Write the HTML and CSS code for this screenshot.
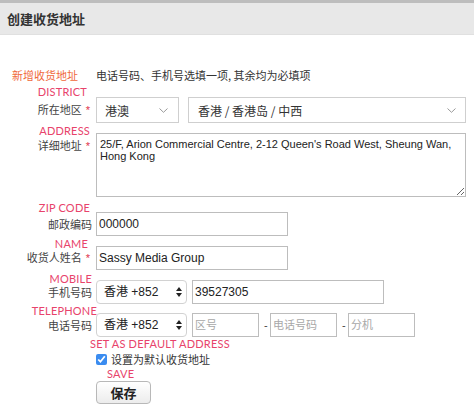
FILE: index.html
```html
<!DOCTYPE html>
<html lang="zh-CN">
<head>
<meta charset="utf-8">
<title>创建收货地址</title>
<link rel="stylesheet" href="styles.css">
</head>
<body>
<header class="topbar">
  <h1 class="topbar-title">创建收货地址</h1>
</header>

<main class="address-form">
  <div class="intro">
    <span class="intro-title">新增收货地址</span>
    <span class="intro-note">电话号码、手机号选填一项, 其余均为必填项</span>
  </div>

  <div class="row row-district">
    <div class="label"><span class="caption cap-district">DISTRICT</span>所在地区<i class="req">*</i></div>
    <div class="field field-split">
      <select class="flat-select flat-select-short"><option>港澳</option></select>
      <select class="flat-select flat-select-wide"><option>香港 / 香港岛 / 中西</option></select>
    </div>
  </div>

  <div class="row row-address">
    <div class="label"><span class="caption cap-address">ADDRESS</span>详细地址<i class="req">*</i></div>
    <div class="field">
      <textarea class="text-area">25/F, Arion Commercial Centre, 2-12 Queen's Road West, Sheung Wan, Hong Kong</textarea>
    </div>
  </div>

  <div class="row row-zip">
    <div class="label label-plain"><span class="caption cap-zip">ZIP CODE</span>邮政编码</div>
    <div class="field">
      <input class="text-input text-input-mid" type="text" value="000000">
    </div>
  </div>

  <div class="row row-name">
    <div class="label"><span class="caption cap-name">NAME</span>收货人姓名<i class="req">*</i></div>
    <div class="field">
      <input class="text-input text-input-mid" type="text" value="Sassy Media Group">
    </div>
  </div>

  <div class="row row-mobile">
    <div class="label label-plain"><span class="caption cap-mobile">MOBILE</span>手机号码</div>
    <div class="field field-inline">
      <select class="round-select"><option>香港 +852</option></select>
      <input class="text-input text-input-mid" type="text" value="39527305">
    </div>
  </div>

  <div class="row row-tel">
    <div class="label label-plain"><span class="caption cap-tel">TELEPHONE</span>电话号码</div>
    <div class="field field-inline">
      <select class="round-select"><option>香港 +852</option></select>
      <input class="text-input text-input-short" type="text" placeholder="区号">
      <span class="dash">-</span>
      <input class="text-input text-input-short" type="text" placeholder="电话号码">
      <span class="dash">-</span>
      <input class="text-input text-input-short" type="text" placeholder="分机">
    </div>
  </div>

  <div class="actions">
    <span class="caption-flow cap-default">SET AS DEFAULT ADDRESS</span>
    <label class="check-line"><input class="check" type="checkbox" checked>设置为默认收货地址</label>
    <span class="caption-flow cap-save">SAVE</span>
    <button class="save-btn" type="button">保存</button>
  </div>
</main>
</body>
</html>
```

FILE: styles.css
```css
html, body {
  margin: 0;
  padding: 0;
  background: #ffffff;
}

body {
  font-family: "Liberation Sans", "Noto Sans CJK SC", sans-serif;
  color: #333333;
  font-size: 11px;
}

/* ---------- top bar ---------- */
.topbar {
  border-top: 3px solid #bdbdbd;
  background: #e8e8e8;
  height: 31px;
  border-bottom: 1px solid #e0e0e0;
  box-sizing: content-box;
}

.topbar-title {
  margin: 0;
  padding-left: 7px;
  font-family: "Noto Sans CJK SC", sans-serif;
  font-size: 13px;
  font-weight: 700;
  line-height: 31px;
  color: #333333;
}

/* ---------- form ---------- */
.address-form {
  display: flex;
  flex-direction: column;
  padding-right: 8px;
}

.intro {
  display: flex;
  margin-top: 32px;
  line-height: 16px;
  font-family: "Noto Sans CJK SC", sans-serif;
  font-size: 11px;
}

.intro-title {
  width: 84px;
  padding-left: 12px;
  color: #f0683a;
}

.intro-note {
  color: #333333;
}

.row {
  display: grid;
  grid-template-columns: 96px 1fr;
}

.row-district { margin-top: 14px; }
.row-address  { margin-top: 10px; }
.row-zip      { margin-top: 15px; }
.row-name     { margin-top: 9px; }
.row-mobile   { margin-top: 10px; }
.row-tel      { margin-top: 9px; }

.label {
  position: relative;
  text-align: right;
  padding-right: 6px;
  line-height: 24px;
  font-family: "Noto Sans CJK SC", sans-serif;
  font-size: 11px;
  color: #444444;
  white-space: nowrap;
}

.label-plain {
  padding-right: 4px;
}

.req {
  font-style: normal;
  color: #e0334a;
  font-family: "Liberation Sans", sans-serif;
  font-size: 11px;
  margin-left: 4px;
}

/* English captions laid over the labels */
.caption {
  position: absolute;
  top: -8px;
  line-height: 10px;
  font-family: Lato, "Liberation Sans", sans-serif;
  font-size: 11px;
  color: #e8436b;
  letter-spacing: 0.2px;
}

.cap-district { right: 9px; top: -10px; }
.cap-address  { right: 6px; top: -7px; }
.cap-zip      { right: 6px; top: -9px; }
.cap-name     { right: 8px; top: -6px; }
.cap-mobile   { right: 4px; top: -6px; }
.cap-tel      { right: -1px; top: -7px; }

.field {
  display: flex;
  align-items: center;
}

.field-split {
  gap: 9px;
}

.field-inline {
  gap: 5px;
}

/* flat selects of the district row */
.flat-select {
  appearance: none;
  -webkit-appearance: none;
  height: 26px;
  border: 1px solid #cfcfcf;
  border-radius: 0;
  background-color: #ffffff;
  background-image: url("data:image/svg+xml,%3Csvg xmlns='http://www.w3.org/2000/svg' width='9' height='5' viewBox='0 0 9 5'%3E%3Cpath d='M0.5 0.5 L4.5 4.3 L8.5 0.5' fill='none' stroke='%23999' stroke-width='1'/%3E%3C/svg%3E");
  background-repeat: no-repeat;
  font-family: "Noto Sans CJK SC", sans-serif;
  font-size: 12px;
  color: #333333;
  margin: 0;
}

.flat-select-short {
  width: 83px;
  padding: 0 0 0 8px;
  background-position: right 10px center;
}

.flat-select-wide {
  flex: 1;
  padding: 0 0 0 9px;
  background-position: right 9px center;
}

/* rounded selects of the phone rows */
.round-select {
  appearance: none;
  -webkit-appearance: none;
  width: 91px;
  height: 24px;
  margin: 0;
  padding: 0 0 0 7px;
  border: 1px solid #d2d2d2;
  border-radius: 4px;
  background-color: #ffffff;
  background-image: url("data:image/svg+xml,%3Csvg xmlns='http://www.w3.org/2000/svg' width='6' height='10' viewBox='0 0 6 10'%3E%3Cpath d='M3 0 L6 4 L0 4 Z M3 10 L6 6 L0 6 Z' fill='%23222'/%3E%3C/svg%3E");
  background-repeat: no-repeat;
  background-position: right 4px center;
  font-family: "Liberation Sans", "Noto Sans CJK SC", sans-serif;
  font-size: 12px;
  color: #222222;
}

.text-area {
  width: 370px;
  height: 64px;
  box-sizing: border-box;
  margin: 0;
  padding: 4px 3px;
  border: 1px solid #bdbdbd;
  font-family: "Liberation Sans", sans-serif;
  font-size: 11px;
  line-height: 12px;
  color: #222222;
}

.text-input {
  box-sizing: border-box;
  height: 24px;
  margin: 0;
  padding: 0 2px;
  border: 1px solid #bdbdbd;
  border-radius: 0;
  font-family: "Liberation Sans", "Noto Sans CJK SC", sans-serif;
  font-size: 12px;
  color: #222222;
}

.text-input::placeholder {
  color: #a8a8a8;
  font-family: "Noto Sans CJK SC", sans-serif;
  font-size: 11px;
}

.text-input-mid {
  width: 192px;
}

.text-input-short {
  width: 67px;
}

.dash {
  flex: none;
  width: 1px;
  text-align: center;
  font-size: 11px;
  color: #444444;
}

/* checkbox + save */
.actions {
  display: flex;
  flex-direction: column;
  align-items: flex-start;
  padding-left: 96px;
}

.caption-flow {
  line-height: 10px;
  font-family: Lato, "Liberation Sans", sans-serif;
  font-size: 11px;
  color: #e8436b;
  letter-spacing: 0.2px;
}

.cap-default {
  margin-top: 2px;
  margin-left: -6px;
}

.check-line {
  display: flex;
  align-items: center;
  margin-top: 3px;
  line-height: 14px;
  font-family: "Noto Sans CJK SC", sans-serif;
  font-size: 11px;
  color: #333333;
}

.check {
  width: 11px;
  height: 11px;
  margin: 0 4px 0 0;
  accent-color: #3a8cf0;
}

.cap-save {
  margin-top: 3px;
  margin-left: 11px;
}

.save-btn {
  margin-top: 2px;
  width: 55px;
  height: 23px;
  padding: 0;
  border: 1px solid #b8b8b8;
  border-radius: 4px;
  background: linear-gradient(#ffffff, #ececec);
  font-family: "Noto Sans CJK SC", sans-serif;
  font-size: 13px;
  font-weight: 700;
  color: #222222;
}
```
